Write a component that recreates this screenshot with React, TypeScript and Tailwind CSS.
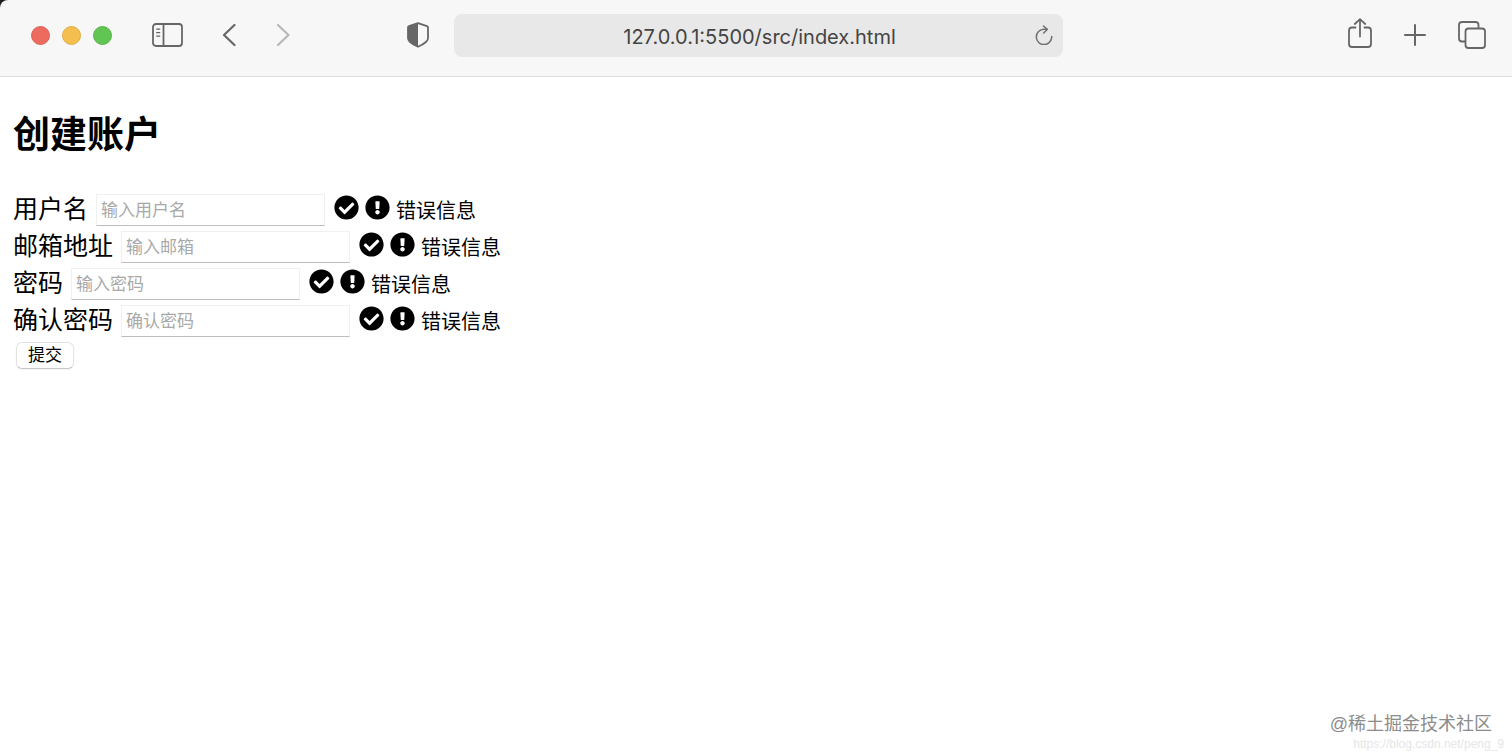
import type { ReactNode } from "react";
import { FaCheckCircle, FaExclamationCircle } from "react-icons/fa";

const fields = [
  { id: "username", label: "用户名", placeholder: "输入用户名", type: "text" },
  { id: "email", label: "邮箱地址", placeholder: "输入邮箱", type: "text" },
  { id: "password", label: "密码", placeholder: "输入密码", type: "password" },
  {
    id: "password2",
    label: "确认密码",
    placeholder: "确认密码",
    type: "password",
  },
];

function ToolbarButton({
  label,
  className,
  children,
}: {
  label: string;
  className?: string;
  children: ReactNode;
}) {
  return (
    <button type="button" aria-label={label} className={className}>
      {children}
    </button>
  );
}

function Toolbar() {
  return (
    <header className="flex h-[77px] items-center rounded-tl-lg border-b border-[#dcdcdc] bg-[#f7f7f7] pb-[6px] text-[#666666]">
      <div className="flex flex-1 items-center pl-[31px]">
        <div className="flex gap-3">
          <span className="size-[19px] rounded-full border border-[#dc6258] bg-[#ed6a5f]" />
          <span className="size-[19px] rounded-full border border-[#e2ad45] bg-[#f5bf4f]" />
          <span className="size-[19px] rounded-full border border-[#58b54a] bg-[#61c554]" />
        </div>
        <ToolbarButton label="Sidebar" className="ml-10">
          <svg width="31" height="24" viewBox="0 0 31 24" fill="none" stroke="currentColor" strokeWidth="1.8">
            <rect x="1" y="1" width="29" height="22" rx="3" />
            <path d="M11.5 1v22" />
            <path d="M4.2 6.2h4M4.2 9.7h4M4.2 13.2h4" strokeWidth="1.3" />
          </svg>
        </ToolbarButton>
        <ToolbarButton label="Back" className="ml-[39px]">
          <svg width="14" height="24" viewBox="0 0 14 24" fill="none" stroke="currentColor" strokeWidth="2.2" strokeLinecap="round" strokeLinejoin="round">
            <path d="M12.5 2 2 12l10.5 10" />
          </svg>
        </ToolbarButton>
        <ToolbarButton label="Forward" className="ml-10 text-[#b8b8b8]">
          <svg width="14" height="24" viewBox="0 0 14 24" fill="none" stroke="currentColor" strokeWidth="2.2" strokeLinecap="round" strokeLinejoin="round">
            <path d="M2 2l10.5 10L2 22" />
          </svg>
        </ToolbarButton>
        <ToolbarButton label="Privacy report" className="mr-[25px] ml-auto">
          <svg width="22" height="26" viewBox="0 0 22 26" fill="none">
            <path
              d="M11 1.2 20 4.2q1 .3 1 1.3V16c0 1.500-.6 2.700-1.800 3.700-2.300 2-5 3.700-8.200 5.100-3.200-1.400-5.900-3.100-8.200-5.100C1.600 18.700 1 17.500 1 16V5.500q0-1 1-1.300z"
              stroke="currentColor"
              strokeWidth="1.8"
              strokeLinejoin="round"
            />
            <path
              d="M11 1.2 2 4.2q-1 .3-1 1.3V16c0 1.500.6 2.700 1.800 3.700 2.300 2 5 3.700 8.200 5.100z"
              fill="currentColor"
            />
          </svg>
        </ToolbarButton>
      </div>

      <div className="flex h-[43px] w-[40.3%] items-center rounded-lg bg-[#e8e8e8] pr-[10px]">
        <input
          aria-label="Address"
          defaultValue="127.0.0.1:5500/src/index.html"
          className="min-w-0 flex-1 bg-transparent pt-1 pl-[30px] text-center font-[Inter,sans-serif] text-[20px] text-[#444444] outline-none"
        />
        <ToolbarButton label="Reload">
          <svg width="18" height="20" viewBox="0 0 18 20" fill="none" stroke="#707070" strokeWidth="1.5" strokeLinecap="round" strokeLinejoin="round">
            <path d="M16.700 11.500A7.700 7.700 0 1 1 9 4.200h3" />
            <path d="M8.500 1 12.200 4.400 8.700 8" />
          </svg>
        </ToolbarButton>
      </div>

      <div className="flex flex-1 items-center justify-end pr-[26px]">
        <ToolbarButton label="Share" className="mr-8 pb-1">
          <svg width="24" height="30" viewBox="0 0 24 30" fill="none" stroke="currentColor" strokeWidth="1.8" strokeLinecap="round" strokeLinejoin="round">
            <path d="M7.500 9.500H4q-3 0-3 3V26q0 3 3 3h16q3 0 3-3V12.500q0-3-3-3h-3.500" />
            <path d="M12 18.500V1.200M6.800 6 12 1.200 17.200 6" />
          </svg>
        </ToolbarButton>
        <ToolbarButton label="New tab" className="mr-8">
          <svg width="22" height="22" viewBox="0 0 22 22" fill="none" stroke="currentColor" strokeWidth="2" strokeLinecap="round">
            <path d="M11 1v20M1 11h20" />
          </svg>
        </ToolbarButton>
        <ToolbarButton label="Tab overview">
          <svg width="28" height="28" viewBox="0 0 28 28" fill="none" stroke="currentColor" strokeWidth="1.8">
            <path d="M7.500 20.500H4q-3 0-3-3V4q0-3 3-3h13.500q3 0 3 3v3" />
            <rect x="7.5" y="7.5" width="19.5" height="19.5" rx="3" />
          </svg>
        </ToolbarButton>
      </div>
    </header>
  );
}

export default function App() {
  return (
    <div className="relative min-h-screen bg-white font-['Liberation_Serif','Noto_Sans_CJK_SC',serif] text-black">
      <div className="bg-[#1c1c1e]">
        <Toolbar />
      </div>

      <main className="px-[13px] pt-8">
        <h2 className="text-[37px] leading-[54px] font-bold">创建账户</h2>
        <form className="mt-7" onSubmit={(e) => e.preventDefault()}>
          {fields.map((field) => (
            <div key={field.id} className="flex h-[37px] items-center">
              <label htmlFor={field.id} className="text-[25px] leading-9">
                {field.label}
              </label>
              <input
                id={field.id}
                type={field.type}
                placeholder={field.placeholder}
                className="ml-2 h-8 w-[229px] border border-[#f0f0f0] border-b-[#bdbdbd] px-1 pt-[2px] font-['Liberation_Sans','Noto_Sans_CJK_SC',sans-serif] text-[17px] outline-none placeholder:text-[#a9a9a9]"
              />
              <div className="ml-[9px] flex gap-[6px] pb-1">
                <FaCheckCircle size={25} />
                <FaExclamationCircle size={25} />
              </div>
              <small className="ml-[6px] pt-[2px] text-[20px] leading-8">
                错误信息
              </small>
            </div>
          ))}
          <button
            type="submit"
            className="mt-[3px] ml-[3px] h-[27px] w-[58px] rounded-md border border-[#e2e2e2] border-b-[#c8c8c8] bg-white font-['Liberation_Sans','Noto_Sans_CJK_SC',sans-serif] text-[17px] leading-6 shadow-xs"
          >
            提交
          </button>
        </form>
      </main>

      <div className="absolute right-0 bottom-1 flex flex-col items-end font-['Liberation_Sans','Noto_Sans_CJK_SC',sans-serif]">
        <span className="mr-5 text-[18px] leading-6 text-[#8c8c8c]">
          @稀土掘金技术社区
        </span>
        <span className="mr-2 text-[12px] leading-4 text-[#e6e6e6]">
          https://blog.csdn.net/peng_9
        </span>
      </div>
    </div>
  );
}
